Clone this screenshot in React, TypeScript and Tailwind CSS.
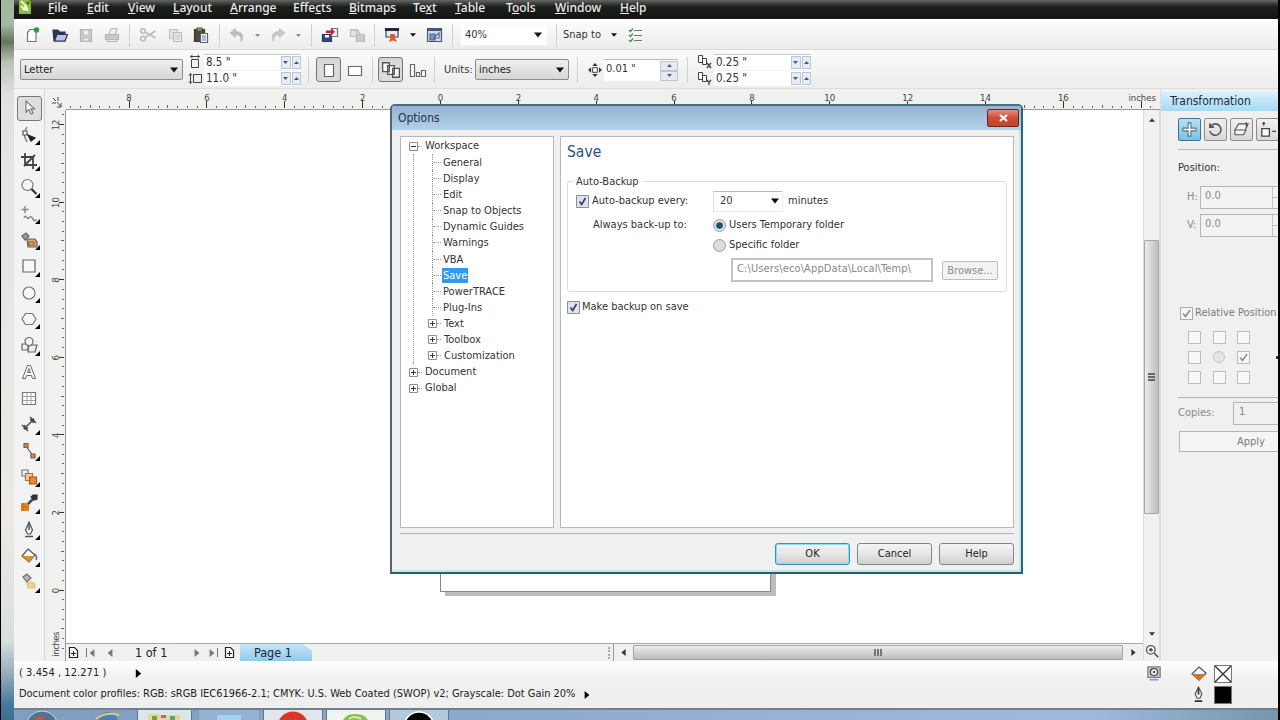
import { ReactNode } from 'react'
import clsx from 'clsx'

const UI_FONT = "font-['DejaVu_Sans_Condensed','DejaVu_Sans',sans-serif]"

const menus = [
  { before: '', key: 'F', after: 'ile', width: 'w-[39px]' },
  { before: '', key: 'E', after: 'dit', width: 'w-[41px]' },
  { before: '', key: 'V', after: 'iew', width: 'w-[45px]' },
  { before: '', key: 'L', after: 'ayout', width: 'w-[57px]' },
  { before: '', key: 'A', after: 'rrange', width: 'w-[63px]' },
  { before: 'Effe', key: 'c', after: 'ts', width: 'w-[56px]' },
  { before: '', key: 'B', after: 'itmaps', width: 'w-[64px]' },
  { before: 'Te', key: 'x', after: 't', width: 'w-[42px]' },
  { before: '', key: 'T', after: 'able', width: 'w-[51px]' },
  { before: 'T', key: 'o', after: 'ols', width: 'w-[49px]' },
  { before: '', key: 'W', after: 'indow', width: 'w-[65px]' },
  { before: '', key: 'H', after: 'elp', width: 'w-[40px]' },
]

const treeItems = [
  { label: 'General' },
  { label: 'Display' },
  { label: 'Edit' },
  { label: 'Snap to Objects' },
  { label: 'Dynamic Guides' },
  { label: 'Warnings' },
  { label: 'VBA' },
  { label: 'Save', selected: true },
  { label: 'PowerTRACE' },
  { label: 'Plug-Ins' },
  { label: 'Text', expandable: true },
  { label: 'Toolbox', expandable: true },
  { label: 'Customization', expandable: true },
]

interface IconProps {
  children: ReactNode
  size?: number
  className?: string
}

function Icon({ children, size = 18, className }: IconProps) {
  return (
    <svg
      width={size}
      height={size}
      viewBox="0 0 18 18"
      fill="none"
      stroke="#555"
      strokeWidth="1.2"
      className={clsx('block shrink-0', className)}
    >
      {children}
    </svg>
  )
}

function Cell({ width, children }: { width: string; children?: ReactNode }) {
  return <div className={clsx('flex h-full shrink-0 items-center justify-center', width)}>{children}</div>
}

function Divider({ className }: { className?: string }) {
  return <div className={clsx('w-px shrink-0 bg-[#d0d0d0]', className)} />
}

type Direction = 'up' | 'down' | 'left' | 'right'

const arrowPaths: Record<Direction, string> = {
  up: 'M0 8 L5 2 L10 8Z',
  down: 'M0 2 L5 8 L10 2Z',
  left: 'M8 0 L2 5 L8 10Z',
  right: 'M2 0 L8 5 L2 10Z',
}

function Arrow({ dir, size = 8, color = '#111' }: { dir: Direction; size?: number; color?: string }) {
  return (
    <svg width={size} height={size} viewBox="0 0 10 10" className="block shrink-0">
      <path d={arrowPaths[dir]} fill={color} />
    </svg>
  )
}

function MenuBar() {
  return (
    <div className="flex h-[19px] shrink-0 bg-linear-to-b from-[#666] via-[#1d1f1d] via-35% to-[#131513]">
      <div className="w-[34px] pl-[3px]">
        <svg width="15" height="15" viewBox="0 0 15 15">
          <path d="M2 0h10l2 2v12H2z" fill="#8dbb3a" />
          <path d="M4 1l6 6M4 6l4 4" stroke="#e9f4c9" strokeWidth="2" />
          <path d="M9 4l3 7-7-1z" fill="#f4f9e4" />
          <circle cx="11" cy="3" r="1.6" fill="#426b1c" />
        </svg>
      </div>
      {menus.map((menu) => (
        <div
          key={menu.before + menu.key + menu.after}
          className={clsx(
            "shrink-0 font-['Noto_Sans','Open_Sans',sans-serif] text-[12px] leading-[16px] font-medium whitespace-nowrap text-[#ececec]",
            menu.width
          )}
        >
          {menu.before}
          <span className="underline underline-offset-1">{menu.key}</span>
          {menu.after}
        </div>
      ))}
    </div>
  )
}

function StandardBar() {
  return (
    <div className="flex h-[31px] shrink-0 items-center border-b border-[#d9d9d9] bg-linear-to-b from-[#fdfdfd] to-[#ececec] pt-[2px] pl-[4px]">
      <Cell width="w-[28px]">
        <Icon>
          <path d="M4.500 6.500L7 3.500h6v12H4.500z" fill="#fff" stroke="#777" />
          <circle cx="13.500" cy="4" r="2.800" fill="#2e9b3c" stroke="none" />
        </Icon>
      </Cell>
      <Cell width="w-[27px]">
        <Icon>
          <path d="M2 4h5l1.500 2H14v9H3z" fill="#2c3554" stroke="#2c3554" />
          <path d="M3.500 15L6 8.500h10.500L14 15z" fill="#b9c4e2" stroke="#2c3554" />
        </Icon>
      </Cell>
      <Cell width="w-[26px]">
        <Icon>
          <path d="M3.500 3.500h11v12h-11z" fill="#cfcfcf" stroke="#b5b5b5" />
          <path d="M6 4h6v5H6zM6 12h6v3H6z" fill="#f0f0f0" stroke="#bcbcbc" />
        </Icon>
      </Cell>
      <Cell width="w-[26px]">
        <Icon>
          <path d="M6 8L8 2.500h6L12.500 8" fill="#eee" stroke="#bbb" />
          <path d="M2.500 8.500h13v5h-13z" fill="#c8c8c8" stroke="#b5b5b5" />
          <path d="M4 13.500h10v2H4z" fill="#e5e5e5" stroke="#bbb" />
        </Icon>
      </Cell>
      <Cell width="w-[9px]"><Divider className="h-[23px]" /></Cell>
      <Cell width="w-[28px]">
        <Icon>
          <circle cx="4" cy="5" r="2.300" stroke="#bcbcbc" strokeWidth="1.600" />
          <circle cx="4" cy="12.500" r="2.300" stroke="#bcbcbc" strokeWidth="1.600" />
          <path d="M6 6l10.500 6M6 11.500L16.500 5" stroke="#bcbcbc" strokeWidth="1.700" />
        </Icon>
      </Cell>
      <Cell width="w-[26px]">
        <Icon>
          <path d="M3.500 3.500h8v9h-8z" fill="#e4e4e4" stroke="#c4c4c4" />
          <path d="M7.500 6.500h8v9h-8z" fill="#eee" stroke="#bdbdbd" />
          <path d="M9 9h5M9 11h5M9 13h5" stroke="#c4c4c4" />
        </Icon>
      </Cell>
      <Cell width="w-[26px]">
        <Icon>
          <path d="M2.500 3.500h10v12h-10z" fill="#4d4a35" stroke="#3c3a2c" />
          <path d="M5 2h5v3H5z" fill="#9b9a7d" stroke="#55523d" />
          <path d="M8.500 7.500h7v9h-7z" fill="#f6f8fd" stroke="#5b6274" />
          <path d="M10 10h4M10 12h4M10 14h4" stroke="#6d7ba0" strokeWidth="1" />
        </Icon>
      </Cell>
      <Cell width="w-[10px]"><Divider className="h-[23px]" /></Cell>
      <Cell width="w-[26px]">
        <Icon>
          <path d="M7.500 2.500L2 7l5.500 4.500V8.700c4 0 6 1.300 5.500 6.800 3.500-5 1.500-10-5.500-10z" fill="#bdbdbd" stroke="#b3b3b3" strokeWidth="0.700" />
        </Icon>
      </Cell>
      <Cell width="w-[14px]"><Arrow dir="down" size={5} color="#8a8a8a" /></Cell>
      <Cell width="w-[27px]">
        <Icon>
          <path d="M10.500 2.500L16 7l-5.500 4.500V8.700c-4 0-6 1.300-5.500 6.800-3.500-5-1.500-10 5.500-10z" fill="#cacaca" stroke="#b8b8b8" strokeWidth="0.700" />
        </Icon>
      </Cell>
      <Cell width="w-[14px]"><Arrow dir="down" size={5} color="#8a8a8a" /></Cell>
      <Cell width="w-[13px]"><Divider className="h-[23px]" /></Cell>
      <Cell width="w-[24px]">
        <Icon>
          <path d="M1.500 8.500h9v7h-9z" fill="#2d4a80" stroke="#263a63" />
          <path d="M4 9h4v2.500H4z" fill="#fff" stroke="none" />
          <path d="M10.500 2.500h6v8h-6z" fill="#eef1f8" stroke="#6d7688" />
          <path d="M5 7V4.500h5V2l4 3.700-4 3.700V7z" fill="#c81e2a" stroke="none" />
        </Icon>
      </Cell>
      <Cell width="w-[29px]">
        <Icon>
          <path d="M2.500 3.500h6v7h-6z" fill="#e2e2e2" stroke="#c0c0c0" />
          <path d="M8.500 8.500h8v7h-8z" fill="#ccc" stroke="#bbb" />
          <path d="M5 4h4l3 4" stroke="#c0c0c0" strokeWidth="2" />
        </Icon>
      </Cell>
      <Cell width="w-[7px]"><Divider className="h-[23px]" /></Cell>
      <Cell width="w-[28px]">
        <Icon>
          <path d="M3 3h12v8H3z" fill="#e9ecf3" stroke="#3a4150" />
          <path d="M2.500 2.500h13v2h-13z" fill="#222a3a" stroke="#222a3a" />
          <path d="M7 8h5v4l2 4-4-1.500L6 16l1.500-4z" fill="#e2582c" stroke="none" />
        </Icon>
      </Cell>
      <Cell width="w-[14px]"><Arrow dir="down" size={6} /></Cell>
      <Cell width="w-[28px]">
        <Icon>
          <path d="M2.500 2.500h14v13h-14z" fill="#cfd9f0" stroke="#4a5778" />
          <path d="M2.500 2.500h14v2.500h-14z" fill="#44547e" stroke="none" />
          <path d="M5 8h5v6H5z" fill="#8494bd" stroke="#53658f" />
          <path d="M9 12l5-5v5z" fill="#fff" stroke="#53658f" />
        </Icon>
      </Cell>
      <Cell width="w-[8px]"><Divider className="h-[23px]" /></Cell>
      <div className="ml-[5px] flex h-[20px] w-[86px] shrink-0 items-center justify-between bg-white pr-[5px] pl-[4px] text-[11px] text-[#333]">
        <span>40%</span>
        <Arrow dir="down" size={8} />
      </div>
      <Divider className="mr-[6px] ml-[9px] h-[23px]" />
      <span className="w-[48px] shrink-0 text-[11px] text-[#333]">Snap to</span>
      <Arrow dir="down" size={6} />
      <Cell width="w-[36px]">
        <Icon>
          <path d="M8 4.500h8M8 9.500h8M8 14.500h8" stroke="#777" />
          <path d="M3 4l1.500 1.500L7 2.500M3 9l1.500 1.500L7 7.500M3 14l1.500 1.500L7 12.500" stroke="#3f8f4d" />
        </Icon>
      </Cell>
    </div>
  )
}

function SideSpinner() {
  return (
    <div className="flex h-[13px] w-[20px] gap-px">
      <div className="flex flex-1 items-center justify-center border border-[#bcc6d6] bg-[#e6ebf4]">
        <Arrow dir="down" size={5} color="#44598a" />
      </div>
      <div className="flex flex-1 items-center justify-center border border-[#bcc6d6] bg-[#e6ebf4]">
        <Arrow dir="up" size={5} color="#44598a" />
      </div>
    </div>
  )
}

function SizeField({ value }: { value: string }) {
  return (
    <div className="flex h-[15px] items-center bg-white">
      <span className="w-[77px] pl-[2px] text-[11.5px] leading-[15px] whitespace-pre text-[#333]">{value}</span>
      <SideSpinner />
    </div>
  )
}

function Combo({ label, className }: { label: string; className: string }) {
  return (
    <div
      className={clsx(
        'flex h-[21px] shrink-0 items-center justify-between rounded-[2px] border border-[#8b8b8b] bg-linear-to-b from-[#f0f0f0] to-[#d6d6d6] pt-px pr-[4px] pl-[3px] text-[11px] text-[#222]',
        className
      )}
    >
      <span>{label}</span>
      <Arrow dir="down" size={8} />
    </div>
  )
}

const pressed = 'flex h-[25px] w-[25px] shrink-0 items-center justify-center rounded-[3px] border border-[#777] bg-[#dcdcdc] inset-shadow-sm'

function PropertyBar() {
  return (
    <div className="flex h-[39px] shrink-0 items-center border-b border-[#dedede] bg-linear-to-b from-[#fafafa] to-[#ececec] pt-px pl-[6px]">
      <Combo label="Letter" className="w-[163px]" />
      <div className="ml-[5px] flex w-[16px] flex-col gap-[3px]">
        <svg width="14" height="14" viewBox="0 0 14 14" fill="none" stroke="#444">
          <path d="M3.500 5.500h7v8h-7zM2.500 2.500h9M4.500 1L2.500 2.500l2 1.500M9.500 1l2 1.500-2 1.500" />
        </svg>
        <svg width="14" height="14" viewBox="0 0 14 14" fill="none" stroke="#444">
          <path d="M5.500 3.500h8v8h-8zM2.500 2.500v10M1 4.500l1.500-2L4 4.500M1 10.500l1.500 2 1.500-2" />
        </svg>
      </div>
      <div className="flex flex-col gap-px border-t border-[#c9c9c9]">
        <SizeField value={'8.5 "'} />
        <SizeField value={'11.0 "'} />
      </div>
      <Divider className="mr-[7px] ml-[7px] h-[26px]" />
      <div className={pressed}>
        <Icon size={18}><path d="M4.500 3.500h9v12h-9z" fill="#fff" stroke="#666" /></Icon>
      </div>
      <Cell width="w-[28px]">
        <Icon><path d="M2.500 5.500h13v9h-13z" fill="#fff" stroke="#666" /></Icon>
      </Cell>
      <Divider className="mr-[5px] ml-[3px] h-[26px]" />
      <div className={pressed}>
        <Icon size={20}>
          <path d="M1.500 2.500h6v8h-6zM6 5h6v8H6zM10.500 7.500h6v8h-6z" fill="#fff" stroke="#555" />
        </Icon>
      </div>
      <Cell width="w-[29px]">
        <Icon><path d="M1.500 3.500h4v12h-4zM7.500 11.500h3v4h-3zM12.500 9.500h4v6h-4z" fill="#fff" stroke="#666" /></Icon>
      </Cell>
      <Divider className="mr-[9px] ml-[2px] h-[26px]" />
      <span className="w-[31px] shrink-0 pt-px text-[11px] text-[#333]">Units:</span>
      <Combo label="inches" className="w-[94px]" />
      <Divider className="mr-[7px] ml-[8px] h-[26px]" />
      <Cell width="w-[19px]">
        <Icon size={14}>
          <path d="M9 0l3.500 4h-7zM9 18l3.500-4h-7zM0 9l4-3.500v7zM18 9l-4-3.500v7z" fill="#333" stroke="none" />
          <path d="M6 6h6v6H6z" fill="#fff" stroke="#333" />
        </Icon>
      </Cell>
      <div className="flex h-[22px] border-t border-[#bbb] bg-white">
        <span className="w-[56px] pl-[2px] text-[11px] leading-[18px] whitespace-pre text-[#333]">{'0.01 "'}</span>
        <div className="flex w-[18px] flex-col pt-px">
          <div className="flex h-[10px] items-center justify-center border border-[#bcc6d6] bg-[#e6eaf0]">
            <Arrow dir="up" size={5} color="#555f78" />
          </div>
          <div className="flex h-[10px] items-center justify-center border border-[#bcc6d6] bg-[#e6eaf0]">
            <Arrow dir="down" size={5} color="#555f78" />
          </div>
        </div>
      </div>
      <Divider className="mr-[9px] ml-[9px] h-[26px]" />
      <div className="flex w-[17px] flex-col gap-[2px]">
        {['M10 9l4 5M14 9l-4 5', 'M10 9l2 2.500L14 9M12 11v3'].map((axis) => (
          <svg key={axis} width="15" height="15" viewBox="0 0 15 15" fill="none" stroke="#444">
            <path d="M1.500 1.500h4v7h-4zM5.500 4.500h4v6h-4z" fill="#fff" />
            <path d={axis} strokeWidth="1.300" />
          </svg>
        ))}
      </div>
      <div className="flex flex-col gap-px border-t border-[#c9c9c9]">
        <SizeField value={'0.25 "'} />
        <SizeField value={'0.25 "'} />
      </div>
    </div>
  )
}

const toolIcons: { flyout: boolean; art: ReactNode }[] = [
  { flyout: false, art: <path d="M6 2v11l3-2.500 2 4.500 2-1-2-4.200h3.500z" fill="#fff" stroke="#777" /> },
  {
    flyout: true,
    art: (
      <>
        <path d="M7 1c-4 5-3 10 0 15" stroke="#666" />
        <path d="M3 5h4v4H3z" fill="#fff" stroke="#555" />
        <path d="M8 9l7 3-4 3z" fill="#222" stroke="#222" />
      </>
    ),
  },
  { flyout: true, art: <path d="M5 1v12h12M1 5h12v12M4 14L15 3" stroke="#444" strokeWidth="1.800" /> },
  {
    flyout: true,
    art: (
      <>
        <circle cx="7.500" cy="7" r="5.500" fill="#f4f7fa" stroke="#777" />
        <path d="M11.500 11l5 5" stroke="#333" strokeWidth="2.200" />
      </>
    ),
  },
  { flyout: true, art: <path d="M5 1v7M1.500 4.500h7M4 13c2-5 3 2 5 0s2-2 4 1 3 1 4 1" stroke="#888" strokeWidth="1.500" /> },
  {
    flyout: true,
    art: (
      <>
        <path d="M2 5l4-3 3 3-4 4z" fill="#8ea3a0" stroke="#5d6d6a" />
        <path d="M7 8h8l2 3v5H8z" fill="#d2a679" stroke="#7a5a3c" />
        <path d="M9 11h5v3H9z" stroke="#8b6845" />
      </>
    ),
  },
  { flyout: true, art: <path d="M3 3h12v12H3z" fill="#f7f8fb" stroke="#666" /> },
  { flyout: true, art: <circle cx="9" cy="9" r="6" fill="#f7f8fb" stroke="#777" /> },
  { flyout: true, art: <path d="M5.500 3.500h7L16 9l-3.500 5.500h-7L2 9z" fill="#f7f8fb" stroke="#777" /> },
  {
    flyout: true,
    art: (
      <>
        <path d="M2 8h6v6H2z" fill="#eee" stroke="#666" />
        <path d="M9 9l8 0-2 7H8z" fill="#eee" stroke="#666" />
        <circle cx="9" cy="5.500" r="4" fill="#f4f4f4" stroke="#666" />
      </>
    ),
  },
  { flyout: false, art: <path d="M2.500 15.500L7.500 2.500h3l5 13h-3l-1-3h-5l-1 3zM7.500 9.500h3L9 5.500z" fill="#fff" stroke="#666" strokeWidth="1" /> },
  {
    flyout: false,
    art: (
      <>
        <path d="M2.500 3.500h13v12h-13z" fill="#fff" stroke="#777" />
        <path d="M7 3v12M11 3v12M2 7.500h13M2 11.500h13" stroke="#999" strokeWidth="0.900" />
      </>
    ),
  },
  { flyout: true, art: <path d="M4 14L14 4M2 10l6 6M10 2l6 6M4 14l1-4M4 14l4-1M14 4l-4 1M14 4l-1 4" stroke="#444" strokeWidth="1.400" /> },
  {
    flyout: true,
    art: (
      <>
        <path d="M6 4l7 10" stroke="#555" />
        <path d="M4 1.500h4v4H4zM11 12h4v4h-4z" fill="#c98a58" stroke="#8d5630" />
      </>
    ),
  },
  {
    flyout: true,
    art: (
      <>
        <path d="M2 2h6v6H2z" fill="#f4f4f4" stroke="#777" />
        <path d="M5.500 5.500h7v7h-7z" fill="#f3cf9f" stroke="#9a7340" />
        <path d="M9.500 9h7v7h-7z" fill="#e98a2d" stroke="#a95a13" />
      </>
    ),
  },
  {
    flyout: true,
    art: (
      <>
        <path d="M1 9h8v8H1z" fill="#e2851f" stroke="none" />
        <path d="M3 9v8M1 13h8" stroke="#c7701a" />
        <path d="M8 10l6-6" stroke="#444b58" strokeWidth="2.500" />
        <path d="M11 3l3 3 3-1V1h-4z" fill="#2d333f" stroke="#2d333f" />
      </>
    ),
  },
  {
    flyout: true,
    art: (
      <>
        <path d="M9 1L5.500 9l2 4h3l2-4z" fill="#f4f6f8" stroke="#4a4f5a" />
        <path d="M9 3v6M5 15.500h8" stroke="#4a4f5a" strokeWidth="1.500" />
      </>
    ),
  },
  {
    flyout: true,
    art: (
      <>
        <path d="M8 2l7 6-6 7-7-6z" fill="#f4f4f4" stroke="#555" />
        <path d="M2.500 9h12L9 15z" fill="#d8922f" stroke="none" />
        <path d="M14 7c3 1 3 4 2 6" stroke="#4b78a8" strokeWidth="1.600" />
      </>
    ),
  },
  {
    flyout: true,
    art: (
      <>
        <path d="M3 4l4-3 4 4-4 4z" fill="#b9b4ae" stroke="#77716a" />
        <path d="M7 11l4-2 4 2v4H8z" fill="#f0d08a" stroke="#e3c27c" />
      </>
    ),
  },
]

function Toolbox() {
  return (
    <div className="flex w-[31px] shrink-0 flex-col items-center border-r border-[#d6d6d6] bg-[#f3f3f3] pt-[6px]">
      {toolIcons.map((tool, i) => (
        <div key={i} className="flex h-[26.35px] w-full shrink-0 items-center justify-center">
          <div
            className={clsx(
              'relative flex h-[25px] w-[25px] items-center justify-center rounded-[3px]',
              i === 0 && 'border border-[#777] bg-[#dedede]'
            )}
          >
            <Icon size={18}>{tool.art}</Icon>
            {tool.flyout && (
              <svg width="5" height="5" viewBox="0 0 5 5" className="absolute right-[2px] bottom-[2px]">
                <path d="M5 0v5H0z" fill="#000" />
              </svg>
            )}
          </div>
        </div>
      ))}
    </div>
  )
}

// both rulers run at about 38.9px to the inch, with a tick each quarter inch
const INCH = 38.93
const quarters = (from: number, to: number) => Array.from({ length: to - from + 1 }, (_, i) => from + i)
const tickLength = (q: number) => (q % 8 === 0 ? 7 : q % 4 === 0 ? 3 : 2)

function HorizontalRuler() {
  return (
    <svg width="1098" height="21" viewBox="45 0 1098 21" className="block shrink-0 overflow-visible">
      <rect x="45" width="1115" height="21" fill="#f0f0ef" />
      <g fill="none" stroke="#444" strokeWidth="1">
        <path d="M53 9l3 3M58 8v4M52 14h4M57 13l4 5M61 14v4h-4" />
        <path d="M66 20.500h1094" stroke="#999" />
        {quarters(-38, 73).map((q) => {
          const x = Math.round(441 + (q * INCH) / 4) - 0.5
          return <path key={q} d={`M${x} ${19 - tickLength(q)}V19`} stroke={q % 8 === 0 ? '#333' : '#666'} />
        })}
      </g>
      <g fontSize="9.500" fill="#444" textAnchor="middle">
        {quarters(-4, 8).map((n) => (
          <text key={n} x={440.5 + n * 2 * INCH} y="12">
            {Math.abs(n * 2)}
          </text>
        ))}
        <text x="1156" y="12" textAnchor="end">
          inches
        </text>
      </g>
    </svg>
  )
}

function VerticalRuler() {
  return (
    <svg width="21" height="551" viewBox="45 110 21 551" className="block shrink-0">
      <rect x="45" y="110" width="21" height="551" fill="#f0f0ef" />
      <path d="M65.500 110v551" stroke="#999" />
      {quarters(-6, 49).map((q) => {
        const y = Math.round(590.5 - (q * 38.8) / 4) - 0.5
        return <path key={q} d={`M${64 - Math.min(tickLength(q), 5)} ${y}H64`} stroke={q % 8 === 0 ? '#333' : '#666'} />
      })}
      <g fontSize="9.500" fill="#444" textAnchor="middle">
        {quarters(0, 6).map((n) => (
          <text key={n} transform={`translate(59 ${590.5 - n * 77.6}) rotate(-90)`}>
            {n * 2}
          </text>
        ))}
        <text transform="translate(59 644) rotate(-90)" textLength="25">inches</text>
      </g>
    </svg>
  )
}

function PageIcon() {
  return (
    <svg width="11" height="13" viewBox="0 0 11 13" fill="none" stroke="#222" className="shrink-0">
      <path d="M1.500 1.500h5l3 3v7h-8zM5.500 5v5M3 7.500h5" fill="#fff" strokeWidth="1.200" />
    </svg>
  )
}

function PageNavigator() {
  return (
    <div className="flex h-[18px] shrink-0 items-center border-t border-[#a8a8a8] bg-[#f0f0f0]">
      <div className="flex h-full w-[548px] shrink-0 items-center border-r border-[#999] pl-[2px]">
        <PageIcon />
        <Cell width="w-[24px]">
          <div className="mr-px h-[9px] w-px bg-[#777]" />
          <Arrow dir="left" size={8} color="#777" />
        </Cell>
        <Cell width="w-[14px]"><Arrow dir="left" size={8} color="#777" /></Cell>
        <span className="ml-[18px] w-[57px] text-[12.5px] leading-4 text-[#222]">1 of 1</span>
        <Cell width="w-[10px]"><Arrow dir="right" size={8} color="#777" /></Cell>
        <Cell width="w-[22px]">
          <Arrow dir="right" size={8} color="#777" />
          <div className="ml-px h-[9px] w-px bg-[#777]" />
        </Cell>
        <PageIcon />
        <div className="ml-[5px] h-[17px] w-[72px] bg-linear-to-b from-[#c4e6f8] to-[#8fcbea] pl-[14px] text-[12.5px] leading-[17px] text-[#223] [clip-path:polygon(0_0,88%_0,100%_40%,100%_100%,0_100%)]">
          Page 1
        </div>
        <div className="mr-[3px] ml-auto h-[12px] border-l-2 border-dotted border-[#aaa]" />
      </div>
      <Cell width="w-[18px]"><Arrow dir="left" size={7} color="#333" /></Cell>
      <div className="ml-px flex h-[15px] w-[490px] items-center justify-center gap-px rounded-[1px] border border-[#a5a5a5] bg-linear-to-b from-[#ececec] to-[#bdbdbd]">
        <div className="h-[7px] w-[2px] bg-[#777]" />
        <div className="h-[7px] w-[2px] bg-[#777]" />
        <div className="h-[7px] w-[2px] bg-[#777]" />
      </div>
      <Cell width="w-[20px]"><Arrow dir="right" size={7} color="#333" /></Cell>
    </div>
  )
}

function VerticalScroll() {
  return (
    <div className="flex w-[17px] shrink-0 flex-col items-center pt-[21px]">
      <div className="flex w-full flex-1 flex-col items-center border-x border-[#ddd] bg-[#f1f1f1] pt-[7px]">
        <Arrow dir="up" size={6} color="#333" />
        <div className="mt-[117px] flex h-[274px] w-full flex-col items-center justify-center gap-px rounded-[1px] border border-[#a5a5a5] bg-linear-to-r from-[#ececec] to-[#bdbdbd]">
          <div className="h-[2px] w-[7px] bg-[#666]" />
          <div className="h-[2px] w-[7px] bg-[#666]" />
          <div className="h-[2px] w-[7px] bg-[#666]" />
        </div>
        <div className="mt-[117px]"><Arrow dir="down" size={6} color="#333" /></div>
        <Icon size={14} className="mt-[7px]">
          <circle cx="7.500" cy="7.500" r="5.500" fill="#fff" stroke="#555" strokeWidth="1.700" />
          <path d="M7.500 5v5M5 7.500h5M12 12l5 5" stroke="#444" strokeWidth="1.900" />
        </Icon>
      </div>
    </div>
  )
}

function Workspace() {
  return (
    <div className="flex w-[1098px] shrink-0 flex-col">
      <HorizontalRuler />
      <div className="flex flex-1">
        <VerticalRuler />
        <div className="flex flex-1 flex-col">
          <div className="relative flex-1 bg-white">
            <div className="absolute top-[53px] left-[374px] h-[429px] w-[331px] border border-[#888] bg-white shadow-[5px_4px_0_#bcbcbc]" />
          </div>
          <PageNavigator />
        </div>
      </div>
    </div>
  )
}

function DockerField({ label, value }: { label: string; value: string }) {
  return (
    <div className="flex h-[23px] items-center pl-[9px] text-[11px] text-[#8a8a8a]">
      <span className="w-[13px] shrink-0">{label}</span>
      <div className="flex h-full flex-1 border border-r-0 border-[#b5b5b5] bg-[#f3f3f3] pl-[4px]">
        <span className="flex-1 leading-[18px]">{value}</span>
        <div className="w-[6px] border-l border-[#c4c4c4]">
          <div className="h-[11px] border-b border-[#c4c4c4]" />
        </div>
      </div>
    </div>
  )
}

const dockerButtons = [
  { active: true, art: <path d="M7.500 2h3v5.500H16v3h-5.500V16h-3v-5.500H2v-3h5.500z" fill="#fff" stroke="#56758c" /> },
  { active: false, art: <path d="M4 5.500a6 6 0 1 1-1 5M3 2.500v4h4.500" stroke="#555" strokeWidth="1.700" /> },
  { active: false, art: <path d="M2 9.500L6 3h10l-3 6.500zM2 9.500v5h9l3-5M14 1v7" fill="#f3f3f3" stroke="#555" /> },
  { active: false, art: <path d="M3 8h8v8H3zM5 1v4M3.500 2.500h3M14 11h4" fill="#fff" stroke="#444" strokeWidth="1.400" /> },
]

function AnchorGrid() {
  const cells = quarters(0, 8)
  return (
    <div className="mt-[10px] ml-[10px] flex items-center justify-between">
      <div className="grid w-[74px] grid-cols-3 gap-y-[7px]">
        {cells.map((i) => {
          if (i === 4) return <div key={i} className="h-[12px] w-[12px] rounded-full border border-[#c4c4c4] bg-[#e6e6e6]" />
          return (
            <div key={i} className="flex h-[13px] w-[13px] items-center justify-center border border-[#bcbcbc] bg-[#f8f8f8]">
              {i === 5 && (
                <svg width="9" height="9" viewBox="0 0 9 9" fill="none">
                  <path d="M1 4.500l2.500 3L8 1" stroke="#888" strokeWidth="1.400" />
                </svg>
              )}
            </div>
          )
        })}
      </div>
      <div className="h-[3px] w-[2px] bg-[#333]" />
    </div>
  )
}

function TransformationDocker() {
  return (
    <div className="flex min-w-0 flex-1 flex-col overflow-hidden border-l border-[#ddd] bg-[#f0f0f0] pt-[3px]">
      <div className="h-[19px] shrink-0 bg-linear-to-b from-[#d9f1fb] to-[#a3dbf5] pl-[9px] text-[12px] leading-[18px] text-[#222a44]">
        Transformation
      </div>
      <div className="flex flex-col pl-[17px]">
        <div className="mt-[7px] flex gap-[3px]">
          {dockerButtons.map((button, i) => (
            <div
              key={i}
              className={clsx(
                'flex h-[23px] w-[23px] shrink-0 items-center justify-center rounded-[2px] border',
                button.active ? 'border-[#3f7196] bg-linear-to-b from-[#b9dff3] to-[#7cc0e4]' : 'border-[#8d8d8d] bg-linear-to-b from-[#f0f0f0] to-[#d9d9d9]'
              )}
            >
              <Icon size={17}>{button.art}</Icon>
            </div>
          ))}
        </div>
        <div className="mt-[8px] h-px bg-[#b9b9b9]" />
        <div className="mt-[10px] h-[16px] text-[11px] leading-4 text-[#333]">Position:</div>
        <div className="mt-[10px] flex flex-col gap-[5px]">
          <DockerField label="H:" value="0.0" />
          <DockerField label="V:" value="0.0" />
        </div>
        <div className="mt-[68px] flex h-[16px] items-center gap-[2px] pl-[2px] text-[11px] whitespace-nowrap text-[#7b7b7b]">
          <div className="flex h-[13px] w-[13px] shrink-0 items-center justify-center border border-[#aaa] bg-[#f6f6f6]">
            <svg width="9" height="9" viewBox="0 0 9 9" fill="none">
              <path d="M1 4.500l2.500 3L8 1" stroke="#888" strokeWidth="1.400" />
            </svg>
          </div>
          Relative Position
        </div>
        <AnchorGrid />
        <div className="mt-[13px] h-px bg-[#b5b5b5]" />
        <div className="mt-[4px] flex h-[23px] items-center text-[11px] text-[#8a8a8a]">
          <span className="w-[55px] shrink-0">Copies:</span>
          <div className="h-full flex-1 border border-r-0 border-[#b5b5b5] pl-[5px] leading-[18px]">1</div>
        </div>
        <div className="mt-[6px] ml-px h-[21px] border border-r-0 border-[#b5b5b5] bg-[#f5f5f5] pl-[57px] text-[11px] leading-[20px] text-[#7b7b7b]">
          Apply
        </div>
      </div>
    </div>
  )
}

function StatusBar() {
  return (
    <div className="flex h-[47px] shrink-0 justify-between bg-linear-to-b from-[#fefefe] via-[#f0f0f0] via-40% to-[#efefef] pr-[46px] pl-[5px] text-[11px] text-[#222]">
      <div className="flex flex-col pt-[2px]">
        <div className="flex h-[21px] items-center">
          <span className="w-[115px] tracking-[0.06px] whitespace-nowrap">( 3.454 , 12.271 )</span>
          <Arrow dir="right" size={9} color="#000" />
        </div>
        <div className="flex h-[21px] items-center">
          <span className="w-[564px] text-[10.95px] whitespace-nowrap">
            Document color profiles: RGB: sRGB IEC61966-2.1; CMYK: U.S. Web Coated (SWOP) v2; Grayscale: Dot Gain 20%
          </span>
          <Arrow dir="right" size={8} color="#000" />
        </div>
      </div>
      <div className="flex pt-[4px]">
        <Icon size={16} className="mr-[28px]">
          <path d="M2 2h14v12H2z" fill="#c4b6bd" stroke="#7c7c8a" />
          <circle cx="9" cy="8" r="4" fill="#e8e8ef" stroke="#444" />
          <circle cx="9" cy="8" r="1.200" fill="#333" stroke="none" />
          <path d="M4 16.500h10" stroke="#88a5cc" strokeWidth="2" />
        </Icon>
        <div className="flex w-[24px] flex-col gap-[3px]">
          <Icon size={18}>
            <path d="M9 2l7 6-7 7-7-6z" fill="#f4f4f4" stroke="#555" />
            <path d="M1.500 9h15L9 16z" fill="#c27a2c" stroke="none" />
          </Icon>
          <Icon size={17}>
            <path d="M9 1L5.500 8.500l2 4.500h3l2-4.500z" fill="#f4f6f8" stroke="#4a4f5a" />
            <path d="M9 3v6M5 16h8" stroke="#333" strokeWidth="1.800" />
          </Icon>
        </div>
        <div className="flex flex-col gap-[3px]">
          <svg width="18" height="18" viewBox="0 0 18 18" fill="#fff" stroke="#333">
            <path d="M0.500 0.500h17v17h-17z" stroke="#777" />
            <path d="M1 1l16 16M17 1L1 17" strokeWidth="1.400" />
          </svg>
          <div className="h-[18px] w-[18px] border border-[#777] bg-black" />
        </div>
      </div>
    </div>
  )
}

const taskButton = 'flex h-[12px] shrink-0 items-end justify-center overflow-hidden rounded-t-[2px] border border-b-0'

function Taskbar() {
  return (
    <div className="flex h-[12px] shrink-0 items-end overflow-hidden border-t-2 border-[#71808c] bg-linear-to-r from-[#7e9dbf] via-[#9fbbdc] via-85% to-[#7397ad]">
      <svg width="123" height="10" viewBox="14 0 123 10" className="shrink-0">
        <circle cx="42" cy="17" r="16" fill="#56718e" stroke="#c4d6e8" />
        <path d="M35 9q5-4 9-2v4h-9z" fill="#c9543a" />
        <circle cx="108" cy="12" r="10" fill="#4c83bd" />
        <path d="M96 9q10-8 23-4" stroke="#e3cb75" strokeWidth="2" fill="none" />
      </svg>
      <div className={clsx(taskButton, 'w-[55px] border-[#60768c] bg-[#dbe6ea]')}>
        <svg width="34" height="7" viewBox="0 0 34 7">
          <path d="M0 1h10l2 1h20v5H0z" fill="#e9d694" />
          <path d="M4 3h5v4H4zM22 3h5v4h-5z" fill="#6ba353" />
          <path d="M13 2h5v3h-5z" fill="#c8644a" />
        </svg>
      </div>
      <div className={clsx(taskButton, 'ml-[6px] w-[62px] border-[#7f9dbb] bg-[#93b2d2]')}>
        <div className="h-[5px] w-[24px] bg-[#a8d2ee]" />
      </div>
      <div className={clsx(taskButton, 'ml-[3px] w-[60px] border-[#60768c] bg-[#e2e6ea]')}>
        <svg width="34" height="9" viewBox="0 0 34 9">
          <circle cx="17" cy="16" r="15.500" fill="#d8352b" />
        </svg>
      </div>
      <div className={clsx(taskButton, 'ml-[3px] w-[60px] border-[#60768c] bg-[#f2f5ee]')}>
        <svg width="34" height="9" viewBox="0 0 34 9">
          <path d="M4 9q4-7 13-6 9 0 12 6z" fill="#8cc152" />
          <path d="M10 8q5-4 12 0" stroke="#e6f3d0" strokeWidth="1.500" fill="none" />
        </svg>
      </div>
      <div className={clsx(taskButton, 'ml-[3px] w-[60px] border-[#60768c] bg-[#b2c8de]')}>
        <svg width="34" height="9" viewBox="0 0 34 9">
          <circle cx="17" cy="16" r="15" fill="#000" stroke="#fff" strokeWidth="1.500" />
        </svg>
      </div>
    </div>
  )
}

function ExpandBox({ open }: { open?: boolean }) {
  return (
    <svg width="9" height="9" viewBox="0 0 9 9" className="relative shrink-0 bg-white">
      <path d="M0.500 0.500h8v8h-8z" fill="#fff" stroke="#8a8f99" />
      <path d={open ? 'M2 4.500h5' : 'M2 4.500h5M4.500 2v5'} stroke="#334" />
    </svg>
  )
}

function OptionsTree() {
  const row = 'flex h-[16.15px] items-center'
  return (
    <div className="w-[154px] shrink-0 border border-[#b8b8b8] bg-white pt-px pl-[8px] text-[11px] text-[#333]">
      <div className={row}>
        <ExpandBox open />
        <div className="mr-[3px] w-[4px] border-t border-dotted border-[#999]" />
        Workspace
      </div>
      <div className="ml-[4px] border-l border-dotted border-[#999]">
        {treeItems.map((item) => (
          <div key={item.label} className="ml-[18px]">
            <div className={clsx(row, !item.expandable && 'border-l border-dotted border-[#999]', item.expandable && '-ml-[4px]')}>
              {item.expandable && <ExpandBox />}
              <div className={clsx('border-t border-dotted border-[#999]', item.expandable ? 'mr-[2px] w-[4px]' : 'mr-[1px] w-[8px]')} />
              <span className={clsx('px-px leading-[15px] whitespace-nowrap', item.selected && 'bg-[#3399ee] text-white')}>
                {item.label}
              </span>
            </div>
          </div>
        ))}
      </div>
      {['Document', 'Global'].map((label) => (
        <div key={label} className={row}>
          <ExpandBox />
          <div className="mr-[3px] w-[4px] border-t border-dotted border-[#999]" />
          {label}
        </div>
      ))}
    </div>
  )
}

function CheckBox() {
  return (
    <svg width="13" height="13" viewBox="0 0 13 13" fill="none" className="shrink-0">
      <path d="M0.500 0.500h12v12H0.500z" fill="#dfe2ea" stroke="#8c8f99" />
      <path d="M3.500 6.500l2.200 3L9.500 3" stroke="#33406b" strokeWidth="1.700" />
    </svg>
  )
}

function Radio({ checked }: { checked?: boolean }) {
  return (
    <svg width="13" height="13" viewBox="0 0 13 13" className="shrink-0">
      <circle cx="6.500" cy="6.500" r="6" fill={checked ? '#d5e2e6' : '#dcdcdc'} stroke="#9a9da3" />
      {checked && <circle cx="6.500" cy="6.500" r="3.300" fill="#1e5264" />}
    </svg>
  )
}

function SavePane() {
  return (
    <div className="flex flex-1 flex-col border border-[#b8b8b8] bg-white pt-[6px] pl-[6px] text-[11px] text-[#333]">
      <h2 className="h-[18px] text-[15.5px] leading-[19px] text-[#2f4f86]">Save</h2>
      <fieldset className="mt-[12px] mr-[6px] h-[119px] rounded-[3px] border border-[#dcdcdc] pl-[8px]">
        <legend className="-ml-[3px] px-[3px] leading-[17px]">Auto-Backup</legend>
        <div className="flex h-[22px] items-center">
          <CheckBox />
          <span className="ml-[3px] w-[121px] shrink-0">Auto-backup every:</span>
          <div className="flex h-[21px] w-[70px] items-center justify-between border border-t-[#bbb] border-r-[#eee] border-b-[#eee] border-l-[#ddd] pr-[3px] pl-[6px]">
            20
            <Arrow dir="down" size={8} color="#000" />
          </div>
          <span className="ml-[5px]">minutes</span>
        </div>
        <div className="mt-[3px] flex h-[20px] items-center">
          <span className="w-[137px] shrink-0 pl-[17px]">Always back-up to:</span>
          <Radio checked />
          <span className="ml-[3px]">Users Temporary folder</span>
        </div>
        <div className="flex h-[21px] items-center pl-[137px]">
          <Radio />
          <span className="ml-[3px]">Specific folder</span>
        </div>
        <div className="mt-[2px] flex items-center pl-[155px]">
          <div className="h-[24px] w-[202px] border-2 border-[#c2c2c2] pl-[4px] leading-[18px] tracking-[0.12px] text-[#888]">
            C:\Users\eco\AppData\Local\Temp\
          </div>
          <div className="ml-[9px] h-[19px] w-[56px] rounded-[2px] border border-[#bdbdbd] bg-[#f3f3f3] text-center leading-[18px] text-[#8a8a8a]">
            Browse...
          </div>
        </div>
      </fieldset>
      <div className="mt-[6px] flex h-[18px] items-center gap-[2px]">
        <CheckBox />
        Make backup on save
      </div>
    </div>
  )
}

const dialogButton = 'h-[22px] w-[75px] rounded-[3px] border bg-linear-to-b from-[#f4f4f4] via-[#e6e6e6] to-[#cfcfcf] text-center text-[11px] leading-[20px] text-[#222]'

function OptionsDialog() {
  return (
    <div className="absolute top-[104px] left-[390px] flex h-[470px] w-[633px] flex-col rounded-t-[5px] border-2 border-t-[#4d6b80] border-r-[#23697a] border-b-[#23606e] border-l-[#57646d] bg-[#f0f0f0]">
      <div className="flex h-[24px] shrink-0 items-center justify-between rounded-t-[3px] bg-linear-to-b from-[#93b4d2] to-[#b4d1e8] pr-[2px] pl-[6px]">
        <span className="text-[12px] text-[#24304c]">Options</span>
        <div className="mb-px flex h-[18px] w-[32px] items-center justify-center rounded-[2px] border border-[#5b2a2a] bg-linear-to-b from-[#dd8f80] via-[#cf4a33] to-[#c6452d]">
          <svg width="9" height="8" viewBox="0 0 9 8">
            <path d="M1 1l7 6M8 1L1 7" stroke="#fff" strokeWidth="2.300" />
          </svg>
        </div>
      </div>
      <div className="flex flex-1 flex-col border-r-2 border-b-2 border-[#c5e6ee] pt-[6px] pr-[5px] pl-[8px]">
        <div className="flex h-[392px] shrink-0 gap-[6px]">
          <OptionsTree />
          <SavePane />
        </div>
        <div className="mt-[5px] h-px bg-[#b5b5b5]" />
        <div className="mt-[9px] flex justify-end gap-[7px]">
          <div className={clsx(dialogButton, 'border-[#2f93ba] inset-ring inset-ring-[#8adcf5]')}>OK</div>
          <div className={clsx(dialogButton, 'border-[#858585]')}>Cancel</div>
          <div className={clsx(dialogButton, 'border-[#858585]')}>Help</div>
        </div>
      </div>
    </div>
  )
}

export default function App() {
  return (
    <div className={clsx('relative flex h-[720px] w-[1280px] overflow-hidden bg-[#f0f0f0]', UI_FONT)}>
      <div className="w-[14px] shrink-0 border-l border-black bg-[linear-gradient(to_bottom,#9cb89a_0px,#a4b8a2_24px,#65745f_42px,#b9c2b8_62px,#dfe1df_95px,#e5e5e5_180px,#ece9e4_520px,#d9dfdf_640px,#94aab8_675px,#45789a_705px,#3a6d8f_720px)]" />
      <div className="flex w-[1264px] shrink-0 flex-col">
        <MenuBar />
        <StandardBar />
        <PropertyBar />
        <div className="flex h-[572px] shrink-0">
          <Toolbox />
          <Workspace />
          <VerticalScroll />
          <TransformationDocker />
        </div>
        <StatusBar />
        <Taskbar />
      </div>
      <div className="flex-1 bg-black" />
      <OptionsDialog />
    </div>
  )
}
